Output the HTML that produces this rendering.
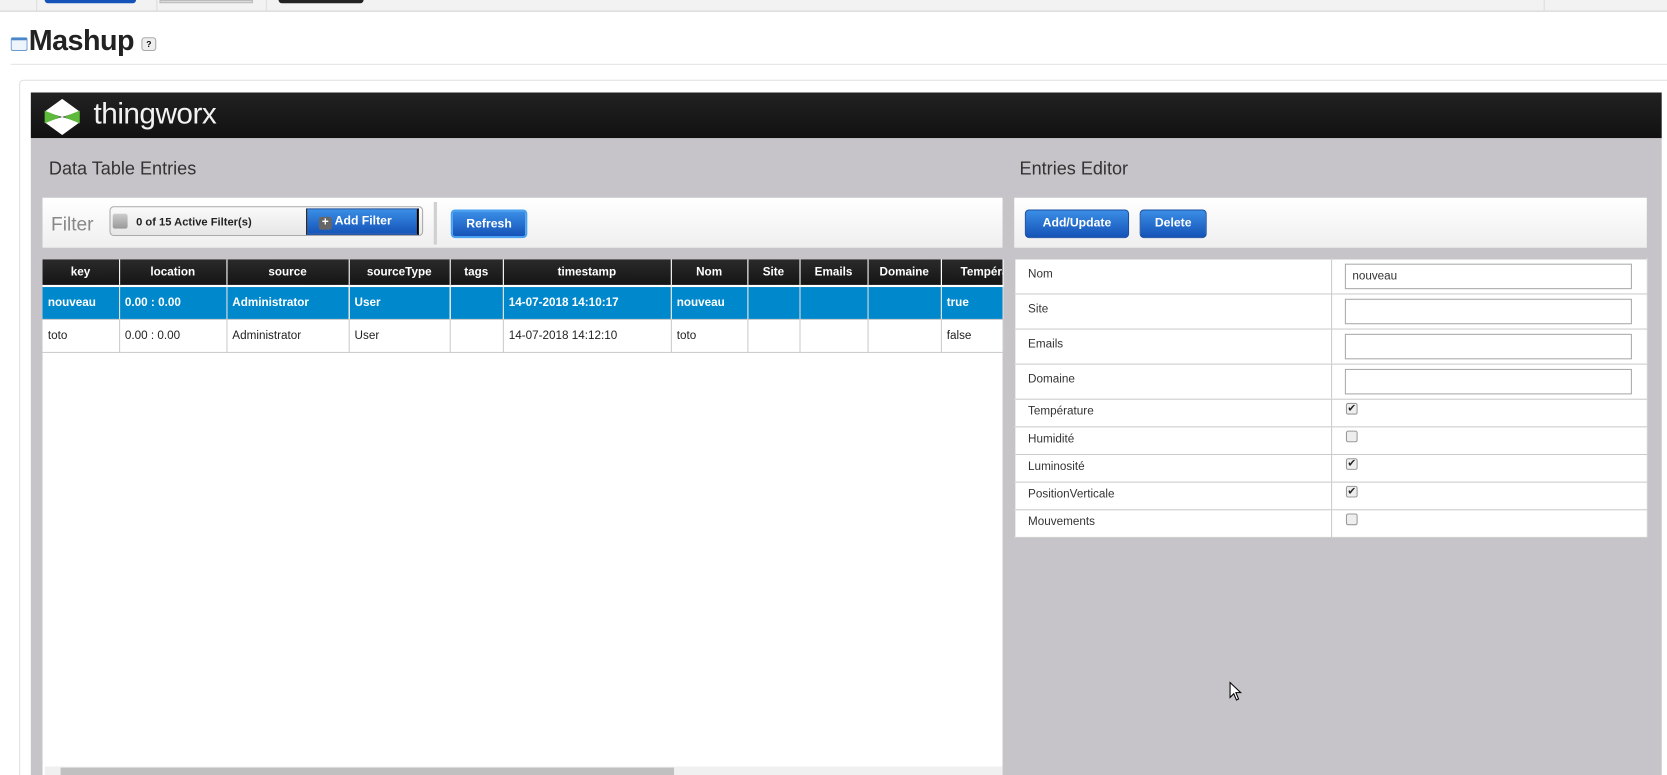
<!DOCTYPE html>
<html><head><meta charset="utf-8"><style>
*{box-sizing:border-box;margin:0;padding:0}
body{width:1667px;height:775px;overflow:hidden;background:#fff;font-family:"Liberation Sans",sans-serif;position:relative}
#w{position:absolute;left:0;top:0;width:1568px;height:729px;transform:scale(1.06314);transform-origin:0 0;overflow:hidden}
.a{position:absolute}
.topbar{left:0;top:0;width:1568px;height:11px;background:#f2f2f2;border-bottom:1px solid #d2d2d2}
.btnb{background:linear-gradient(#3a8ee6,#1553b8);border:1px solid #1c4fa0;border-radius:4px;color:#fff;font-weight:bold;font-size:11.5px;text-align:center}
th{background:linear-gradient(#2a2a2a,#151515);color:#fff;font-size:11px;font-weight:bold;height:25px;border-right:1px solid #fff;border-bottom:2px solid #fff;text-align:center}
td{font-size:11px;height:31px;border-right:1px solid #ccc;border-bottom:1px solid #ccc;padding-left:5px;white-space:nowrap;overflow:hidden;color:#222}
tr.sel td{background:#0088cc;color:#fff;font-weight:bold;border-right:1px solid #ddd}
table{border-collapse:collapse;table-layout:fixed}
.fr td{font-size:11px;color:#333;vertical-align:top;padding:8px 12px;height:auto}
.inp{width:270px;height:24px;border:1px solid #aaa;background:#fff;font-size:11px;padding:5px 6px}
.cb{width:11px;height:11px;border:1px solid #999;border-radius:2px;background:#eee;font-size:10px;line-height:9px;text-align:center;color:#222;margin-left:1px}
</style></head><body><div id="w">
<div class="a topbar"></div>
<div class="a" style="left:42px;top:0;width:86px;height:3px;background:#1553b8;border-radius:0 0 3px 3px"></div>
<div class="a" style="left:150px;top:0;width:88px;height:3px;background:#ddd;border:1px solid #bbb"></div>
<div class="a" style="left:262px;top:0;width:80px;height:3px;background:#222;border-radius:0 0 3px 3px"></div>
<div class="a" style="left:34px;top:0;width:1px;height:10px;background:#ddd"></div>
<div class="a" style="left:147px;top:0;width:1px;height:10px;background:#ddd"></div>
<div class="a" style="left:250px;top:0;width:1px;height:10px;background:#ddd"></div>
<div class="a" style="left:1452px;top:0;width:1px;height:10px;background:#ddd"></div>

<div class="a" style="left:10px;top:35px;width:16px;height:13px;border:1px solid #6a9ad0;border-top:3px solid #4a86c8;background:#eef4fb;border-radius:2px"></div>
<div class="a" style="left:27px;top:23px;font-size:27px;font-weight:bold;color:#222;letter-spacing:-0.5px">Mashup</div>
<div class="a" style="left:133px;top:35px;width:14px;height:13px;border:1px solid #aaa;border-radius:3px;background:#eee;font-size:8px;text-align:center;line-height:11px;font-weight:bold">?</div>
<div class="a" style="left:10px;top:60px;width:1558px;height:1px;background:#e5e5e5"></div>

<div class="a" style="left:18px;top:75px;width:1560px;height:720px;border:1px solid #e0e0e0;border-radius:4px"></div>
<div class="a" style="left:29px;top:87px;width:1534px;height:43px;background:linear-gradient(#222,#111)"></div>
<svg class="a" style="left:41px;top:93px" width="35" height="34" viewBox="0 0 35 34">
<polygon points="17.5,0 34,12 17.5,17 1,12" fill="#fff"/>
<polygon points="17.5,34 34,22 17.5,17 1,22" fill="#fff"/>
<polygon points="1,11 16,17 1,23" fill="#5dba3b"/>
<polygon points="34,11 19,17 34,23" fill="#5dba3b"/>
</svg>
<div class="a" style="left:88px;top:91px;font-size:28px;color:#f2f2f2;letter-spacing:-0.5px">thingworx</div>

<div class="a" style="left:29px;top:130px;width:1534px;height:600px;background:#c6c4c9"></div>
<div class="a" style="left:46px;top:149px;font-size:17px;color:#333">Data Table Entries</div>
<div class="a" style="left:959px;top:149px;font-size:17px;color:#333">Entries Editor</div>

<div class="a" style="left:40px;top:186px;width:903px;height:47px;background:linear-gradient(#fff,#efefef)"></div>
<div class="a" style="left:48px;top:201px;font-size:18px;color:#888">Filter</div>
<div class="a" style="left:103px;top:194px;width:295px;height:28px;border:1px solid #aaa;border-radius:4px;background:linear-gradient(#fafafa,#e6e6e6)"></div>
<div class="a" style="left:106px;top:201px;width:14px;height:14px;background:linear-gradient(#ccc,#999);border-radius:2px"></div>
<div class="a" style="left:128px;top:203px;font-size:10.5px;font-weight:bold;color:#222">0 of 15 Active Filter(s)</div>
<div class="a btnb" style="left:288px;top:196px;width:106px;height:25px;border-radius:0;border-left:1px solid #000;border-right:2px solid #000;text-align:left;padding:5px 0 0 11px">
<span style="display:inline-block;width:12px;height:12px;background:#666;border-radius:2px;color:#fff;font-size:11px;line-height:11px;text-align:center;vertical-align:-1px">+</span> Add Filter</div>
<div class="a" style="left:408px;top:190px;width:3px;height:40px;background:#d0d0d0"></div>
<div class="a btnb" style="left:424px;top:197px;width:72px;height:27px;line-height:25px;border:2px solid #4aa0f0">Refresh</div>

<div class="a" style="left:40px;top:244px;width:903px;height:486px;background:#fff"></div>
<table class="a" style="left:40px;top:244px;width:903px">
<colgroup><col style="width:72px"><col style="width:101px"><col style="width:115px"><col style="width:95px"><col style="width:50px"><col style="width:158px"><col style="width:72px"><col style="width:49px"><col style="width:64px"><col style="width:69px"><col style="width:58px"></colgroup>
<tr><th>key</th><th>location</th><th>source</th><th>sourceType</th><th>tags</th><th>timestamp</th><th>Nom</th><th>Site</th><th>Emails</th><th>Domaine</th><th style="text-align:left;padding-left:18px;white-space:nowrap;overflow:hidden">Température</th></tr>
<tr class="sel"><td>nouveau</td><td>0.00 : 0.00</td><td>Administrator</td><td>User</td><td></td><td>14-07-2018 14:10:17</td><td>nouveau</td><td></td><td></td><td></td><td>true</td></tr>
<tr><td>toto</td><td>0.00 : 0.00</td><td>Administrator</td><td>User</td><td></td><td>14-07-2018 14:12:10</td><td>toto</td><td></td><td></td><td></td><td>false</td></tr>
</table>
<div class="a" style="left:42px;top:721px;width:901px;height:8px;background:#f0f0f0"></div>
<div class="a" style="left:57px;top:722px;width:577px;height:7px;background:#c0c0c0"></div>

<div class="a" style="left:954px;top:186px;width:595px;height:47px;background:linear-gradient(#fff,#efefef)"></div>
<div class="a btnb" style="left:964px;top:197px;width:98px;height:27px;line-height:25px">Add/Update</div>
<div class="a btnb" style="left:1072px;top:197px;width:63px;height:27px;line-height:25px">Delete</div>

<table class="a fr" style="left:954px;top:243px;width:595px;background:#fff;border-top:1px solid #bbb;border-left:1px solid #bbb">
<colgroup><col style="width:298px"><col style="width:297px"></colgroup>
<tr style="height:33px"><td>Nom</td><td style="padding:4px 12px"><div class="inp">nouveau</div></td></tr>
<tr style="height:33px"><td>Site</td><td style="padding:4px 12px"><div class="inp"></div></td></tr>
<tr style="height:33px"><td>Emails</td><td style="padding:4px 12px"><div class="inp"></div></td></tr>
<tr style="height:33px"><td>Domaine</td><td style="padding:4px 12px"><div class="inp"></div></td></tr>
<tr style="height:25px"><td style="padding-top:5px">Température</td><td style="padding-top:3px"><div class="cb">✔</div></td></tr>
<tr style="height:25px"><td style="padding-top:5px">Humidité</td><td style="padding-top:3px"><div class="cb"></div></td></tr>
<tr style="height:25px"><td style="padding-top:5px">Luminosité</td><td style="padding-top:3px"><div class="cb">✔</div></td></tr>
<tr style="height:25px"><td style="padding-top:5px">PositionVerticale</td><td style="padding-top:3px"><div class="cb">✔</div></td></tr>
<tr style="height:25px"><td style="padding-top:5px">Mouvements</td><td style="padding-top:3px"><div class="cb"></div></td></tr>
</table>
<svg class="a" style="left:1156px;top:641px" width="13" height="19" viewBox="0 0 13 19"><path d="M1 1 L1 15 L4.5 11.5 L7 17.5 L9 16.5 L6.5 10.5 L11 10.5 Z" fill="#fff" stroke="#000" stroke-width="1"/></svg>
</div></body></html>
